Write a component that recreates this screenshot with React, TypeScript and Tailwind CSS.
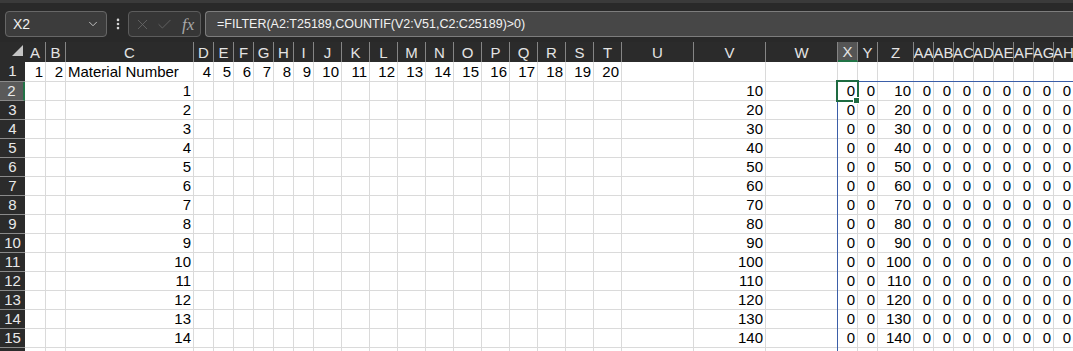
import { ChevronDown, X, Check, EllipsisVertical } from "lucide-react";

type Col = { key: string; w: string };

const cols: Col[] = [
  { key: "A", w: "w-[21px]" },
  { key: "B", w: "w-[20px]" },
  { key: "C", w: "w-[128px]" },
  { key: "D", w: "w-[20px]" },
  { key: "E", w: "w-[20px]" },
  { key: "F", w: "w-[20px]" },
  { key: "G", w: "w-[20px]" },
  { key: "H", w: "w-[20px]" },
  { key: "I", w: "w-[20px]" },
  { key: "J", w: "w-[28px]" },
  { key: "K", w: "w-[28px]" },
  { key: "L", w: "w-[28px]" },
  { key: "M", w: "w-[28px]" },
  { key: "N", w: "w-[28px]" },
  { key: "O", w: "w-[28px]" },
  { key: "P", w: "w-[28px]" },
  { key: "Q", w: "w-[28px]" },
  { key: "R", w: "w-[28px]" },
  { key: "S", w: "w-[28px]" },
  { key: "T", w: "w-[28px]" },
  { key: "U", w: "w-[72px]" },
  { key: "V", w: "w-[72px]" },
  { key: "W", w: "w-[72px]" },
  { key: "X", w: "w-[20px]" },
  { key: "Y", w: "w-[20px]" },
  { key: "Z", w: "w-[36px]" },
  { key: "AA", w: "w-[20px]" },
  { key: "AB", w: "w-[20px]" },
  { key: "AC", w: "w-[20px]" },
  { key: "AD", w: "w-[20px]" },
  { key: "AE", w: "w-[20px]" },
  { key: "AF", w: "w-[20px]" },
  { key: "AG", w: "w-[20px]" },
  { key: "AH", w: "w-[20px]" },
];

const zeroCols = ["X", "Y", "AA", "AB", "AC", "AD", "AE", "AF", "AG", "AH"];

// what sits in a cell: text, and whether it's left aligned (text) or right (numbers)
const cellValue = (row: number, key: string, idx: number) => {
  if (row === 1) {
    if (key === "C") return { text: "Material Number", left: true };
    if (idx < 20) return { text: String(idx + 1), left: false };
    return { text: "", left: false };
  }
  const n = row - 1;
  if (key === "C") return { text: String(n), left: false };
  if (key === "V" || key === "Z") return { text: String(n * 10), left: false };
  if (zeroCols.includes(key)) return { text: "0", left: false };
  return { text: "", left: false };
};

const rows = Array.from({ length: 15 }, (_, i) => i + 1);

const FormulaBar = () => (
  <div className="h-[42px] bg-[#292929] flex flex-col">
    <div className="h-[3px] bg-[#3a3a3a]" />
    <div className="flex items-center mt-[8px] h-[26px]">
      <div className="ml-[5px] w-[102px] h-full rounded-[4px] border border-[#676767] bg-[#3c3c3c] flex items-center justify-between pl-[7px] pr-[6px]">
        <span className="text-[14px] text-[#f0f0f0]">X2</span>
        <ChevronDown size={14} strokeWidth={1.5} className="text-[#d0d0d0]" />
      </div>
      <EllipsisVertical size={14} strokeWidth={2.5} className="ml-[4px] text-[#d6d6d6]" />
      <div className="ml-[3px] w-[73px] h-full rounded-[4px] border border-[#5c5c5c] bg-[#363636] flex items-center pl-[5px] gap-[5px]">
        <X size={17} strokeWidth={1.1} className="text-[#6c6c6c]" />
        <Check size={17} strokeWidth={1.1} className="text-[#6c6c6c]" />
        <span className="ml-[4px] font-['Liberation_Serif',serif] italic text-[17px] text-[#a8a8a8] leading-none">
          fx
        </span>
      </div>
      <div className="ml-[4px] flex-1 h-full rounded-l-[4px] border border-r-0 border-[#7d7d7d] bg-[#474747] flex items-center pl-[11px]">
        <span className="text-[12.5px] text-[#f2f2f2] whitespace-nowrap">
          =FILTER(A2:T25189,COUNTIF(V2:V51,C2:C25189)&gt;0)
        </span>
      </div>
    </div>
  </div>
);

const HeaderRow = () => (
  <div className="flex h-[20px] bg-[#2b2b2b] text-[15px] text-[#e4e4e4]">
    <div className="w-[25px] shrink-0 relative">
      <svg width="25" height="20" className="absolute left-0 top-0">
        <polygon points="23,3 23,14 12,14" fill="#c4c4c4" />
      </svg>
    </div>
    {cols.map((c) => (
      <div
        key={c.key}
        className={`${c.w} shrink-0 flex items-center justify-center overflow-hidden border-r border-[#858585] ${
          c.key === "X" ? "bg-[#555555] border-b-2 border-b-[#217346]" : ""
        }`}
      >
        <span className="leading-none whitespace-nowrap">{c.key}</span>
      </div>
    ))}
  </div>
);

export default function App() {
  return (
    <div className="w-[1073px] h-[351px] overflow-hidden bg-white font-['Liberation_Sans',sans-serif]">
      <FormulaBar />
      <div className="relative">
        <HeaderRow />
        {rows.map((r) => (
          <div
            key={r}
            className={`flex ${r === 1 ? "h-[20px]" : "h-[19px]"} text-[15px] text-black`}
          >
            <div
              className={`w-[25px] shrink-0 flex items-center justify-center border-b text-[#e8e8e8] ${
                r === 2
                  ? "bg-[#5a5a5a] border-r-2 border-r-[#217346] border-b-[#8a8a8a]"
                  : "bg-[#2b2b2b] border-b-[#8a8a8a]"
              }`}
            >
              {r}
            </div>
            {cols.map((c, i) => {
              const v = cellValue(r, c.key, i);
              return (
                <div
                  key={c.key}
                  className={`${c.w} shrink-0 flex items-center pt-[1px] overflow-visible whitespace-nowrap border-r border-b border-[#dadada] ${
                    v.left ? "justify-start pl-[2px]" : "justify-end pr-[2px]"
                  }`}
                >
                  {v.text}
                </div>
              );
            })}
          </div>
        ))}
        {/* top of row 16, cut by the window */}
        <div className="flex h-[10px]">
          <div className="w-[25px] shrink-0 bg-[#2b2b2b]" />
          {cols.map((c) => (
            <div key={c.key} className={`${c.w} shrink-0 border-r border-[#dadada]`} />
          ))}
        </div>

        {/* spill range outline */}
        <div className="absolute left-[837px] top-[39px] right-0 bottom-0 border-l border-t border-[#3b5ea8] pointer-events-none" />
        {/* active cell X2 */}
        <div className="absolute left-[836px] top-[38px] w-[23px] h-[22px] border-2 border-[#1e6b41] pointer-events-none" />
        <div className="absolute left-[853px] top-[55px] w-[7px] h-[7px] bg-[#1e6b41] border border-white" />
      </div>
    </div>
  );
}
